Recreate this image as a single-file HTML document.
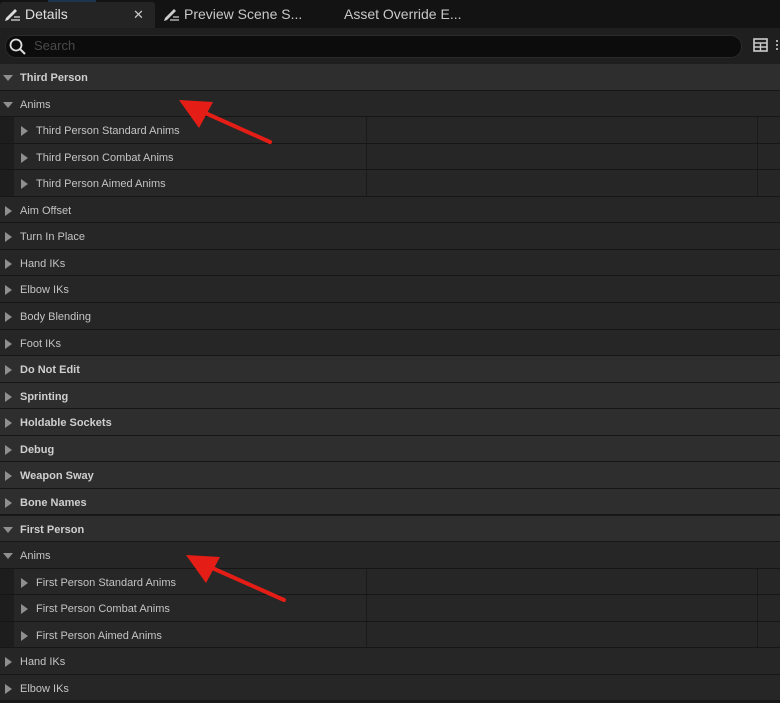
<!DOCTYPE html>
<html><head><style>
body{margin:0;width:780px;height:703px;background:#1a1a1a;overflow:hidden;font-family:"Liberation Sans",sans-serif;position:relative}
.tabbar{position:absolute;left:0;top:0;width:780px;height:28px;background:#131313}
.tab{position:absolute;top:2px;height:26px;color:#c8c8c8;font-size:14px;line-height:25px}
.sbar{position:absolute;left:0;top:28px;width:780px;height:36px;background:#1f1f1f}
.row{position:absolute;left:0;width:780px;height:25.5px;background:#262626;border-bottom:1px solid #161616;color:#c4c4c4;font-size:11px;line-height:28px}
.row.b{background:#2e2e2e;font-weight:bold;color:#cfcfcf}
.row span{position:absolute;left:20px}
.tri{position:absolute;left:5px;top:9px;width:0;height:0;border-left:7px solid #8f8f8f;border-top:5px solid transparent;border-bottom:5px solid transparent}
.down{position:absolute;left:3px;top:11px;width:0;height:0;border-top:6px solid #8f8f8f;border-left:5.5px solid transparent;border-right:5.5px solid transparent}
.row.sub{background:#1d1d1d}
.row.sub .in{position:absolute;left:14px;top:0;width:352px;height:100%;background:#272727;border-right:1px solid #1a1a1a}
.row.sub .in2{position:absolute;left:367px;top:0;width:390px;height:100%;background:#262626;border-right:1px solid #1a1a1a}
.row.sub .in3{position:absolute;left:758px;top:0;width:22px;height:100%;background:#262626}
.row.sub span{left:36px}
.row.sub .tri{left:21px}
</style></head><body>
<div class="tabbar">
 <div style="position:absolute;left:0;top:2px;width:155px;height:26px;background:#242424;border-radius:3px 3px 0 0"></div>
 <div style="position:absolute;left:48px;top:0;width:48px;height:2px;background:#1e3550"></div>
 <svg style="position:absolute;left:3px;top:6px" width="18" height="16" viewBox="0 0 18 16"><path d="M3 12 L12 3 L14 5 L5 14 L2 15 Z" fill="#ddd"/><path d="M8 14 H17 M11 11 H17" stroke="#ddd" stroke-width="1.3"/></svg>
 <div class="tab" style="left:25px;color:#e0e0e0">Details</div>
 <div class="tab" style="left:133px;font-size:13px">✕</div>
 <svg style="position:absolute;left:162px;top:6px" width="18" height="16" viewBox="0 0 18 16"><path d="M3 12 L12 3 L14 5 L5 14 L2 15 Z" fill="#ccc"/><path d="M8 14 H17 M11 11 H17" stroke="#ccc" stroke-width="1.3"/></svg>
 <div class="tab" style="left:184px">Preview Scene S...</div>
 <div class="tab" style="left:344px">Asset Override E...</div>
</div>
<div class="sbar">
 <div style="position:absolute;left:5px;top:7px;width:735px;height:21px;background:#0c0c0c;border-radius:11px;border:1px solid #2a2a2a"></div>
 <svg style="position:absolute;left:9px;top:10px" width="18" height="18" viewBox="0 0 18 18"><circle cx="7" cy="7" r="5.5" stroke="#ddd" stroke-width="1.8" fill="none"/><path d="M11 11 L16 16" stroke="#ddd" stroke-width="2"/></svg>
 <div style="position:absolute;left:34px;top:10px;color:#4a4a4a;font-size:13px">Search</div>
 <svg style="position:absolute;left:753px;top:10px" width="16" height="15" viewBox="0 0 16 15"><rect x="1" y="1" width="13" height="12" fill="none" stroke="#ccc" stroke-width="1.6"/><path d="M1 5 H14 M1 9 H14 M7.5 5 V13" stroke="#ccc" stroke-width="1.4"/></svg>
 <div style="position:absolute;left:776px;top:12px;width:3px;height:10px;border-left:2px dotted #aaa"></div>
</div>
<div class="row b" style="top:64px"><div class="down"></div><span>Third Person</span></div>
<div class="row" style="top:90.56px"><div class="down"></div><span>Anims</span></div>
<div class="row sub" style="top:117.12px"><div class="in"></div><div class="in2"></div><div class="in3"></div><div class="tri"></div><span>Third Person Standard Anims</span></div>
<div class="row sub" style="top:143.68px"><div class="in"></div><div class="in2"></div><div class="in3"></div><div class="tri"></div><span>Third Person Combat Anims</span></div>
<div class="row sub" style="top:170.24px"><div class="in"></div><div class="in2"></div><div class="in3"></div><div class="tri"></div><span>Third Person Aimed Anims</span></div>
<div class="row" style="top:196.8px"><div class="tri"></div><span>Aim Offset</span></div>
<div class="row" style="top:223.36px"><div class="tri"></div><span>Turn In Place</span></div>
<div class="row" style="top:249.92px"><div class="tri"></div><span>Hand IKs</span></div>
<div class="row" style="top:276.48px"><div class="tri"></div><span>Elbow IKs</span></div>
<div class="row" style="top:303.04px"><div class="tri"></div><span>Body Blending</span></div>
<div class="row" style="top:329.6px"><div class="tri"></div><span>Foot IKs</span></div>
<div class="row b" style="top:356.16px"><div class="tri"></div><span>Do Not Edit</span></div>
<div class="row b" style="top:382.72px"><div class="tri"></div><span>Sprinting</span></div>
<div class="row b" style="top:409.28px"><div class="tri"></div><span>Holdable Sockets</span></div>
<div class="row b" style="top:435.84px"><div class="tri"></div><span>Debug</span></div>
<div class="row b" style="top:462.4px"><div class="tri"></div><span>Weapon Sway</span></div>
<div class="row b" style="top:488.96px"><div class="tri"></div><span>Bone Names</span></div>
<div class="row b" style="top:515.52px"><div class="down"></div><span>First Person</span></div>
<div class="row" style="top:542.08px"><div class="down"></div><span>Anims</span></div>
<div class="row sub" style="top:568.64px"><div class="in"></div><div class="in2"></div><div class="in3"></div><div class="tri"></div><span>First Person Standard Anims</span></div>
<div class="row sub" style="top:595.2px"><div class="in"></div><div class="in2"></div><div class="in3"></div><div class="tri"></div><span>First Person Combat Anims</span></div>
<div class="row sub" style="top:621.76px"><div class="in"></div><div class="in2"></div><div class="in3"></div><div class="tri"></div><span>First Person Aimed Anims</span></div>
<div class="row" style="top:648.32px"><div class="tri"></div><span>Hand IKs</span></div>
<div class="row" style="top:674.88px"><div class="tri"></div><span>Elbow IKs</span></div>
<svg style="position:absolute;left:0;top:0" width="780" height="703">
 <path d="M270 142 L203 112" stroke="#e41e16" stroke-width="4" stroke-linecap="round"/>
 <path d="M179 100 L213 102 L199 128 Z" fill="#e41e16"/>
 <path d="M284 600 L210 567" stroke="#e41e16" stroke-width="4" stroke-linecap="round"/>
 <path d="M186 555 L220 557 L206 583 Z" fill="#e41e16"/>
</svg>
</body></html>
